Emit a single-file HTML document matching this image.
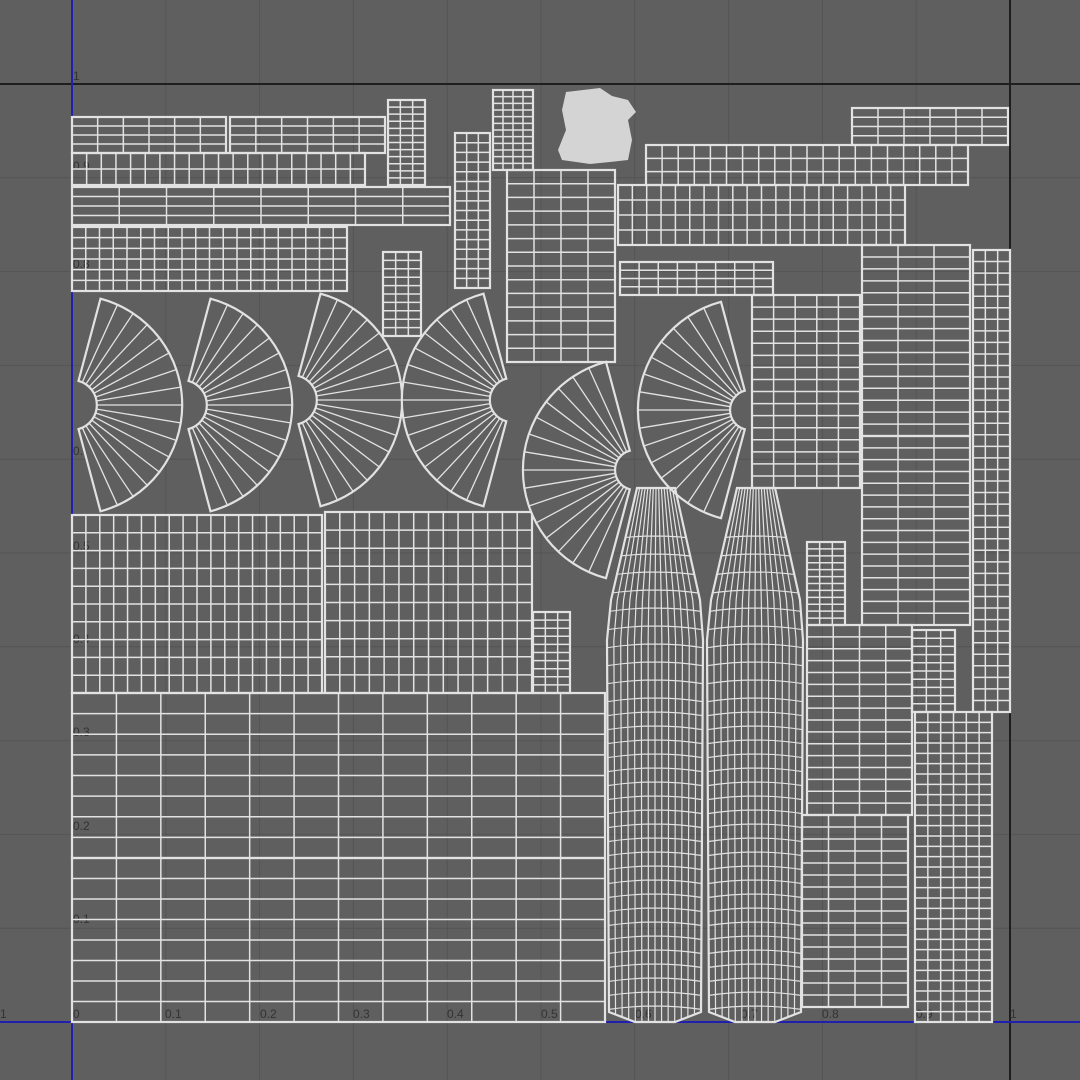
<!DOCTYPE html>
<html><head><meta charset="utf-8"><style>
html,body{margin:0;padding:0;background:#5f5f5f;width:1080px;height:1080px;overflow:hidden}
svg{display:block}
</style></head><body>
<svg id="s" width="1080" height="1080" xmlns="http://www.w3.org/2000/svg">
<rect width="1080" height="1080" fill="#5f5f5f"/>
<g id="grid" stroke="#545454" stroke-width="1"></g>
<line x1="0" y1="84" x2="1080" y2="84" stroke="#1e1e1e" stroke-width="2"/>
<line x1="1010" y1="0" x2="1010" y2="1080" stroke="#1e1e1e" stroke-width="2"/>
<line x1="0" y1="1022" x2="1080" y2="1022" stroke="#2020b0" stroke-width="2"/>
<line x1="72" y1="0" x2="72" y2="1080" stroke="#2020b0" stroke-width="2"/>
<g font-family="Liberation Sans, sans-serif" font-size="12" fill="#333">
<text x="73" y="80">1</text><text x="0" y="1018">1</text><text x="1010" y="1018">1</text>
<text x="73" y="170">0.9</text><text x="73" y="268">0.8</text><text x="73" y="455">0.6</text>
<text x="73" y="550">0.5</text><text x="73" y="643">0.4</text><text x="73" y="736">0.3</text>
<text x="73" y="830">0.2</text><text x="73" y="923">0.1</text><text x="73" y="1018">0</text>
<text x="165" y="1018">0.1</text><text x="260" y="1018">0.2</text><text x="353" y="1018">0.3</text>
<text x="447" y="1018">0.4</text><text x="541" y="1018">0.5</text><text x="635" y="1018">0.6</text>
<text x="741" y="1018">0.7</text><text x="822" y="1018">0.8</text><text x="916" y="1018">0.9</text>
</g>
<g id="m" fill="none" stroke="#e2e2e2" stroke-width="1.6"></g>
<path d="M566,92 L600,88 L612,96 L628,100 L636,112 L628,120 L632,140 L628,160 L610,162 L590,164 L562,160 L558,150 L566,130 L562,110 Z" fill="#d4d4d4"/>
</svg>
<script>
var NS="http://www.w3.org/2000/svg",m=document.getElementById('m'),g=document.getElementById('grid');
function el(t,a,p){var e=document.createElementNS(NS,t);for(var k in a)e.setAttribute(k,a[k]);(p||m).appendChild(e);return e;}
for(var i=0;i<12;i++){var x=72+i*93.8;el('line',{x1:x,y1:0,x2:x,y2:1080},g);el('line',{x1:0,y1:1022-i*93.8,x2:1080,y2:1022-i*93.8},g);}
function R(x1,y1,x2,y2,c,r){var d='M'+x1+','+y1+'H'+x2+'V'+y2+'H'+x1+'Z';
for(var i=1;i<c;i++){var x=x1+(x2-x1)*i/c;d+='M'+x+','+y1+'V'+y2;}
for(var j=1;j<r;j++){var y=y1+(y2-y1)*j/r;d+='M'+x1+','+y+'H'+x2;}
el('path',{d:d,'stroke-width':1.5});el('rect',{x:x1,y:y1,width:x2-x1,height:y2-y1,'stroke-width':2.2});}
[[72,117,226,153,6,4],[230,117,385,153,6,4],[72,153,365,185,20,2],[72,187,450,225,8,4],[72,227,347,291,20,6],
[388,100,425,185,3,12],[455,133,490,288,3,16],[493,90,533,170,4,12],[507,170,615,362,4,14],
[852,108,1008,145,6,4],[646,145,968,185,20,3],[618,185,905,245,20,4],[383,252,421,336,3,10],
[620,262,773,295,8,4],[752,295,860,488,5,16],[862,245,970,436,3,16],[973,250,1010,712,3,40],
[862,436,970,625,3,16],[72,515,322,693,18,10],[325,512,532,693,14,10],[533,612,570,693,3,10],
[807,542,845,625,3,12],[72,693,605,858,12,8],[72,858,605,1022,12,8],[807,625,912,815,4,16],
[802,815,908,1007,4,16],[912,630,955,712,3,10],[915,712,992,1022,6,30]].forEach(function(a){R.apply(null,a)});
function F(cx,cy,ri,ro,a0,a1,n){var rad=Math.PI/180,d='';
function p(r,a){return (cx+r*Math.cos(a*rad)).toFixed(1)+','+(cy+r*Math.sin(a*rad)).toFixed(1);}
d='M'+p(ri,a0)+'L'+p(ro,a0)+'A'+ro+','+ro+' 0 0 1 '+p(ro,a1)+'L'+p(ri,a1)+'A'+ri+','+ri+' 0 0 0 '+p(ri,a0)+'Z';
el('path',{d:d,'stroke-width':2.2,fill:'#5f5f5f'});
var dd='';for(var i=1;i<n;i++){var a=a0+(a1-a0)*i/n;dd+='M'+p(ri,a)+'L'+p(ro,a);}
el('path',{d:dd,'stroke-width':1.3});}
F(72,405,25,110,-75,75,16);F(182,405,25,110,-75,75,16);F(292,400,25,110,-75,75,16);
F(512,400,22,110,105,255,16);F(635,470,20,112,105,255,16);F(750,410,20,112,105,255,16);
function B(x0){var w=100,d='M'+(x0+32)+',488 L'+(x0+70)+',488 L'+(x0+95)+',600 L'+(x0+98)+',640 L'+(x0+96)+',1012 L'+(x0+70)+',1022 L'+(x0+30)+',1022 L'+(x0+4)+',1012 L'+(x0+2)+',640 L'+(x0+6)+',600 Z';
var id='c'+x0;var cp=el('clipPath',{id:id});el('path',{d:d},cp);
var gg=el('g',{'clip-path':'url(#'+id+')'});var dd='';
for(var i=1;i<14;i++){var t=i/14;dd+='M'+(x0+32+38*t)+',488 L'+(x0+6+88*t)+',600 L'+(x0+2+96*t)+',640 L'+(x0+4+92*t)+',1022';}
for(var y=540;y<1022;y+=(y<700?18:14)){dd+='M'+x0+','+y+' Q'+(x0+50)+','+(y-8)+' '+(x0+100)+','+y;}
el('path',{d:dd,'stroke-width':1.2},gg);el('path',{d:d,'stroke-width':2.2});}
B(605);B(705);
</script>
</body></html>
